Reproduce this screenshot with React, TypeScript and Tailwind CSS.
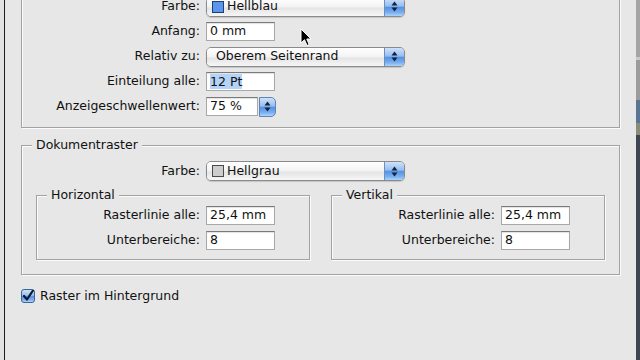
import React from "react";

const aqua =
  "bg-[linear-gradient(#cfe2fa,#97bdee_45%,#5592e2_52%,#79adee_80%,#acd5fb)]";
const etched =
  "border border-[#a3a3a3] shadow-[1px_1px_0_#fbfbfb,inset_1px_1px_0_#fbfbfb]";

function Arrows() {
  return (
    <svg width="7" height="11" viewBox="0 0 7 11">
      <path d="M3.5 0.5 L6.5 4.5 L0.5 4.5 Z" fill="#13223f" />
      <path d="M3.5 10.5 L6.5 6.5 L0.5 6.5 Z" fill="#13223f" />
    </svg>
  );
}

function Popup({ children }: { children: React.ReactNode }) {
  return (
    <div className="flex h-[20px] w-[199px] overflow-hidden rounded-[5px] border border-[#8a8a8a] shadow-[0_1px_1px_rgba(0,0,0,0.15)]">
      <div className="flex flex-1 items-center gap-[3px] bg-[linear-gradient(#ffffff,#f3f3f3_50%,#e4e4e4_55%,#f6f6f6)] pl-[5px]">
        {children}
      </div>
      <div className={`flex w-[20px] items-center justify-center border-l border-[#6b8fc0] ${aqua}`}>
        <Arrows />
      </div>
    </div>
  );
}

function Swatch({ color, border }: { color: string; border: string }) {
  return (
    <span
      className="inline-block h-[12px] w-[12px] border"
      style={{ backgroundColor: color, borderColor: border }}
    />
  );
}

function Field({
  children,
  w = "w-[69px]",
}: {
  children: React.ReactNode;
  w?: string;
}) {
  return (
    <div
      className={`flex h-[19px] ${w} items-center border border-[#a8a8a8] border-t-[#7a7a7a] bg-white pl-[3px] shadow-[inset_0_1px_1px_rgba(0,0,0,0.12)]`}
    >
      {children}
    </div>
  );
}

function Legend({ children }: { children: React.ReactNode }) {
  return (
    <div className="-mt-[9px] ml-[10px] w-fit bg-[#e7e7e7] px-[4px] leading-[16px]">
      {children}
    </div>
  );
}

function SubBox({ title }: { title: string }) {
  return (
    <div className={`flex-1 ${etched} pb-[6px]`}>
      <Legend>{title}</Legend>
      <div className="grid grid-cols-[163px_auto] items-center gap-x-[6px] auto-rows-[25px]">
        <span className="text-right">Rasterlinie alle:</span>
        <Field>25,4 mm</Field>
        <span className="text-right">Unterbereiche:</span>
        <Field>8</Field>
      </div>
    </div>
  );
}

export default function App() {
  return (
    <div className="relative flex h-[360px] w-[640px] overflow-hidden bg-[#e7e7e7] font-['Lucida_Grande','DejaVu_Sans',sans-serif] text-[12.5px] text-[#111]">
      <div className="w-[4px] bg-[#e2e2e2]" />
      <div className="w-[1px] bg-[#1c1c1c]" />

      <div className="flex flex-1 flex-col px-[16px]">
        {/* Hilfslinien group (top cut off) */}
        <div className={`-mt-[18px] ${etched} pt-[11px] pb-[8px]`}>
          <div className="grid grid-cols-[178px_auto] items-center gap-x-[6px] auto-rows-[25px]">
            <span className="text-right">Farbe:</span>
            <Popup>
              <Swatch color="#5a97ec" border="#1f3f78" />
              <span>Hellblau</span>
            </Popup>
            <span className="text-right">Anfang:</span>
            <Field>0 mm</Field>
            <span className="text-right">Relativ zu:</span>
            <Popup>
              <span className="pl-[4px]">Oberem Seitenrand</span>
            </Popup>
            <span className="text-right">Einteilung alle:</span>
            <Field>
              <span className="bg-[#b4d3f7] leading-[15px]">12 Pt</span>
            </Field>
            <span className="text-right">Anzeigeschwellenwert:</span>
            <div className="flex items-center">
              <Field w="w-[52px]">75 %</Field>
              <div
                className={`ml-[1px] flex h-[20px] w-[17px] items-center justify-center rounded-r-[5px] border border-[#5d83b8] ${aqua}`}
              >
                <Arrows />
              </div>
            </div>
          </div>
        </div>

        {/* Dokumentraster */}
        <div className={`mt-[17px] ${etched} pb-[14px]`}>
          <Legend>Dokumentraster</Legend>
          <div className="mt-[6px] grid grid-cols-[178px_auto] items-center gap-x-[6px] auto-rows-[24px]">
            <span className="text-right">Farbe:</span>
            <Popup>
              <Swatch color="#cdcdcd" border="#4a4a4a" />
              <span>Hellgrau</span>
            </Popup>
          </div>
          <div className="mt-[12px] flex gap-[21px] px-[14px]">
            <SubBox title="Horizontal" />
            <SubBox title="Vertikal" />
          </div>
        </div>

        <div className="mt-[13px] flex h-[16px] items-center gap-[5px]">
          <div
            className={`flex h-[14px] w-[14px] items-center justify-center rounded-[3px] border border-[#3e6396] ${aqua}`}
          >
            <svg width="12" height="12" viewBox="0 0 12 12">
              <path
                d="M2 6 L5 9.5 L11 0.5"
                fill="none"
                stroke="#0d1830"
                strokeWidth="2.2"
                strokeLinecap="round"
                strokeLinejoin="round"
              />
            </svg>
          </div>
          <span>Raster im Hintergrund</span>
        </div>
      </div>

      <div className="flex w-[4px] flex-col">
        <div className="h-[57px] bg-[#a5a5a5]" />
        <div className="h-[3px] bg-[#cacaca]" />
        <div className="h-[40px] bg-[#9c9c9c]" />
        <div className="h-[23px] bg-[#5a7594]" />
        <div className="h-[12px] bg-[#8a8c78]" />
        <div className="flex-1 bg-[#3f4652]" />
      </div>

      <svg
        className="absolute left-[300px] top-[28px]"
        width="12"
        height="19"
        viewBox="0 0 12 19"
      >
        <path
          d="M1 1 L1 15 L4.5 11.7 L7 17.5 L9.2 16.6 L6.8 11 L11 11 Z"
          fill="#000"
          stroke="#fff"
          strokeWidth="1"
          strokeLinejoin="round"
        />
      </svg>
    </div>
  );
}
